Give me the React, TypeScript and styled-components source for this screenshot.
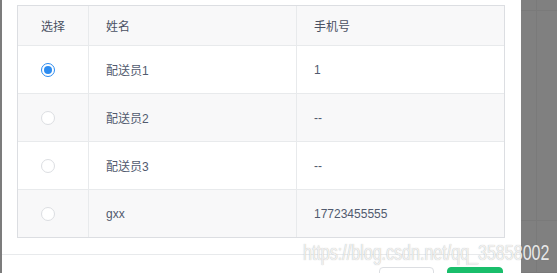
import React from "react";
import styled, { createGlobalStyle } from "styled-components";

const rows = [
  { name: "配送员1", phone: "1", checked: true },
  { name: "配送员2", phone: "--", checked: false },
  { name: "配送员3", phone: "--", checked: false },
  { name: "gxx", phone: "17723455555", checked: false },
];

const App = () => {
  return (
    <Screen>
      <GlobalStyle />
      <EdgeStrip />
      <Dialog>
        <DialogBody>
          <Table>
            <HeadCell $center>选择</HeadCell>
            <HeadCell>姓名</HeadCell>
            <HeadCell>手机号</HeadCell>
            {rows.map((r, i) => (
              <React.Fragment key={r.name}>
                <Cell $center $stripe={i % 2 === 1} $last={i === rows.length - 1}>
                  <Radio $checked={r.checked} />
                </Cell>
                <Cell $stripe={i % 2 === 1} $last={i === rows.length - 1}>
                  {r.name}
                </Cell>
                <Cell $stripe={i % 2 === 1} $last={i === rows.length - 1}>
                  {r.phone}
                </Cell>
              </React.Fragment>
            ))}
          </Table>
        </DialogBody>
        <Footer>
          <Button>取消</Button>
          <Button className="primary">确定</Button>
        </Footer>
      </Dialog>
      <Backdrop>
        <BackdropCell />
        <BackdropCell />
        <BackdropCell className="tall" />
        <BackdropCell className="tall" />
        <BackdropCell />
        <BackdropCell />
      </Backdrop>
      <Watermark>https://blog.csdn.net/qq_35858002</Watermark>
    </Screen>
  );
};

export default App;

const GlobalStyle = createGlobalStyle`
  html, body {
    margin: 0;
    padding: 0;
    background: #808080;
  }
  body {
    font-family: "Liberation Sans", "Noto Sans CJK SC", sans-serif;
  }
`;

const Screen = styled.div`
  position: relative;
  display: flex;
  width: 557px;
  height: 273px;
  overflow: hidden;
  background: #808080;
`;

const EdgeStrip = styled.div`
  width: 2px;
  flex-shrink: 0;
  background: #7c7c7c;
`;

const Dialog = styled.div`
  width: 519px;
  flex-shrink: 0;
  display: flex;
  flex-direction: column;
  background: #ffffff;
`;

const DialogBody = styled.div`
  padding: 5px 16px 16px 15px;
`;

const Table = styled.div`
  display: grid;
  grid-template-columns: 71px 208px 1fr;
  border: 1px solid #dcdee2;
  font-size: 12px;
  color: #515a6e;
`;

const HeadCell = styled.div<{ $center?: boolean }>`
  height: 39px;
  display: flex;
  align-items: center;
  justify-content: ${(p) => (p.$center ? "center" : "flex-start")};
  padding-left: ${(p) => (p.$center ? "0" : "17px")};
  background: #f8f8f9;
  color: #4a5163;
  border-bottom: 1px solid #e8eaec;
  border-right: 1px solid #e8eaec;

  &:nth-child(3) {
    border-right: none;
  }
`;

const Cell = styled.div<{ $center?: boolean; $stripe?: boolean; $last?: boolean }>`
  height: 47px;
  display: flex;
  align-items: center;
  justify-content: ${(p) => (p.$center ? "center" : "flex-start")};
  padding-left: ${(p) => (p.$center ? "0" : "17px")};
  background: ${(p) => (p.$stripe ? "#f8f8f9" : "#ffffff")};
  border-bottom: ${(p) => (p.$last ? "none" : "1px solid #e8eaec")};
  border-right: 1px solid #e8eaec;

  &:nth-child(3n) {
    border-right: none;
  }
`;

const Radio = styled.span<{ $checked?: boolean }>`
  position: relative;
  display: inline-block;
  box-sizing: border-box;
  width: 14px;
  height: 14px;
  margin-right: 10px;
  border-radius: 50%;
  background: #fff;
  border: 1px solid ${(p) => (p.$checked ? "#2d8cf0" : "#dcdee2")};

  &::after {
    content: "";
    display: ${(p) => (p.$checked ? "block" : "none")};
    position: absolute;
    left: 2px;
    top: 2px;
    width: 8px;
    height: 8px;
    border-radius: 50%;
    background: #2d8cf0;
  }
`;

const Footer = styled.div`
  display: flex;
  justify-content: flex-end;
  gap: 13px;
  padding: 12px 18px 12px 0;
  border-top: 1px solid #e8eaec;
`;

const Button = styled.button`
  box-sizing: border-box;
  height: 32px;
  width: 55px;
  border-radius: 4px;
  border: 1px solid #dcdee2;
  background: #fff;
  color: #515a6e;
  font-size: 12px;
  font-family: inherit;

  &.primary {
    width: 56px;
    background: #19be6b;
    border-color: #19be6b;
    color: #fff;
  }
`;

const Backdrop = styled.div`
  flex: 1;
  display: grid;
  grid-template-columns: 16px 1fr;
  grid-template-rows: 11px 210px 1fr;
`;

const BackdropCell = styled.div`
  border-right: 1px solid #7a7a7a;
  border-bottom: 1px solid #7a7a7a;

  &:nth-child(2n) {
    border-right: none;
  }
`;

const Watermark = styled.div`
  position: absolute;
  left: 303px;
  top: 240px;
  font-family: "Liberation Sans", sans-serif;
  font-size: 22px;
  line-height: 26px;
  white-space: nowrap;
  color: rgba(248, 248, 248, 0.9);
  text-shadow: 0 0 1px rgba(110, 110, 110, 0.55);
  transform: scaleX(0.73);
  transform-origin: left center;
  pointer-events: none;
`;
